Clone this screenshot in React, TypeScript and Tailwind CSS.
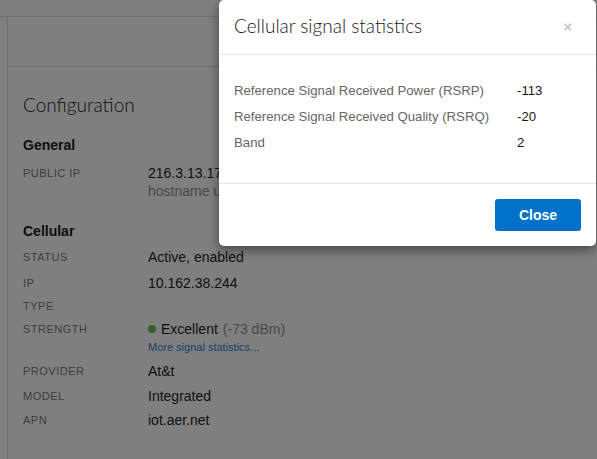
import React from "react";

function Row({
  label,
  children,
  className = "",
}: {
  label: string;
  children?: React.ReactNode;
  className?: string;
}) {
  return (
    <div className={`flex ${className}`}>
      <div className="w-[125px] shrink-0 text-[11px] tracking-[0.5px] uppercase text-[#7a7a7a] leading-[17px] pt-[1px]">
        {label}
      </div>
      <div className="text-[14px] leading-[18px] text-[#1e1e1e]">{children}</div>
    </div>
  );
}

function Page() {
  return (
    <div className="min-h-[459px] bg-white">
      <div className="h-[17px] border-b border-[#dcdcdc]" />
      <div className="ml-[7px] border-l border-[#dcdcdc] min-h-[442px]">
        <div className="h-[50px] border-b border-[#dcdcdc]" />
        <div className="pl-[15px] pt-[26px]">
          <h1 className="font-['Lato'] font-light text-[19px] leading-[24px] text-[#1a1a1a]">
            Configuration
          </h1>
          <h2 className="mt-[19px] text-[14px] font-bold leading-[18px] text-[#1a1a1a]">General</h2>
          <Row label="Public IP" className="mt-[10px]">
            <div>216.3.13.17</div>
            <div className="text-[#909090]">hostname unavailable</div>
          </Row>
          <h2 className="mt-[22px] text-[14px] font-bold leading-[18px] text-[#1a1a1a]">Cellular</h2>
          <Row label="Status" className="mt-[8px]">
            Active, enabled
          </Row>
          <Row label="IP" className="mt-[8px]">
            10.162.38.244
          </Row>
          <Row label="Type" className="mt-[5px]" />
          <Row label="Strength" className="mt-[5px]">
            <div className="flex items-center">
              <span className="w-[8px] h-[8px] rounded-full bg-[#6ebd4c] mr-[5px]" />
              Excellent <span className="ml-[5px] text-[#8f8f8f]">(-73 dBm)</span>
            </div>
            <div className="text-[11px] leading-[14px] mt-[2px] text-[#2f80d0]">
              More signal statistics...
            </div>
          </Row>
          <Row label="Provider" className="mt-[8px]">
            At&amp;t
          </Row>
          <Row label="Model" className="mt-[7px]">
            Integrated
          </Row>
          <Row label="APN" className="mt-[6px]">
            iot.aer.net
          </Row>
        </div>
      </div>
    </div>
  );
}

const stats = [
  { label: "Reference Signal Received Power (RSRP)", value: "-113" },
  { label: "Reference Signal Received Quality (RSRQ)", value: "-20" },
  { label: "Band", value: "2" },
];

function Modal() {
  return (
    <div className="absolute left-[219px] top-0 w-[377px] bg-white rounded-[5px] shadow-[0_4px_12px_rgba(0,0,0,0.45)]">
      <div className="h-[55px] flex items-center justify-between pl-[15px] pr-[24px] border-b border-[#e5e5e5]">
        <div className="font-['Lato'] font-light text-[19px] text-[#1a1a1a] leading-[22px] -mt-[2px]">
          Cellular signal statistics
        </div>
        <span className="text-[15px] font-bold text-[#c8c8c8] leading-none -mt-[2px]">×</span>
      </div>
      <div className="pl-[15px] pt-[23px] pb-[27px] border-b border-[#e5e5e5]">
        {stats.map((s) => (
          <div key={s.label} className="flex h-[26px] items-center text-[13.2px]">
            <div className="w-[283px] text-[#666666]">{s.label}</div>
            <div className="text-[#1a1a1a]">{s.value}</div>
          </div>
        ))}
      </div>
      <div className="flex justify-end pt-[15px] pb-[15px] pr-[15px]">
        <button className="w-[86px] h-[32px] rounded-[3px] bg-[#0271c9] text-white text-[14px] font-bold">
          Close
        </button>
      </div>
    </div>
  );
}

export default function App() {
  return (
    <div className="relative w-[597px] h-[459px] overflow-hidden font-['Liberation_Sans',Arial,sans-serif]">
      <Page />
      <div className="absolute inset-0 bg-black/50" />
      <Modal />
    </div>
  );
}
